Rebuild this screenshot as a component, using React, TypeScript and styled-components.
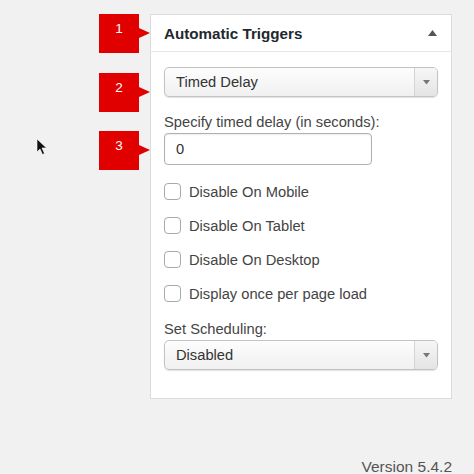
import React from "react";
import styled, { createGlobalStyle } from "styled-components";

const Global = createGlobalStyle`
  html, body { margin: 0; padding: 0; }
  body {
    background: #f1f1f1;
    font-family: "Liberation Sans", Arial, Helvetica, sans-serif;
    color: #32373c;
    width: 474px;
    height: 474px;
    overflow: hidden;
  }
`;

const Page = styled.div`
  position: relative;
  width: 474px;
  height: 474px;
  display: flex;
  flex-direction: column;
  align-items: flex-start;
  padding: 14px 0 0 150px;
  box-sizing: border-box;
`;

const Cursor = styled.svg`
  position: absolute;
  left: 36px;
  top: 138px;
`;

const Panel = styled.section`
  width: 302px;
  box-sizing: border-box;
  background: #fff;
  border: 1px solid #dcdcde;
`;

const Header = styled.header`
  position: relative;
  height: 37px;
  box-sizing: border-box;
  border-bottom: 1px solid #e6e6e6;
  display: flex;
  align-items: center;
  justify-content: space-between;
  padding: 0 14px 0 13px;
`;

const Title = styled.h2`
  margin: 0;
  font-size: 15.2px;
  font-weight: 700;
  color: #23282d;
`;

const Body = styled.div`
  display: flex;
  flex-direction: column;
  padding: 15px 13px 28px 13px;
`;

const Field = styled.div<{ $gap?: number }>`
  position: relative;
  display: flex;
  flex-direction: column;
  align-items: flex-start;
  margin-top: ${(p) => p.$gap ?? 0}px;
`;

const Marker = styled.div<{ $top: number }>`
  position: absolute;
  left: -65px;
  top: ${(p) => p.$top}px;
  width: 40px;
  height: 39px;
  background: #e10000;
  color: #fff;
  font-size: 13.5px;
  display: flex;
  justify-content: center;
  padding-top: 7px;
  box-sizing: border-box;
  &::after {
    content: "";
    position: absolute;
    left: 40px;
    top: 14px;
    border-top: 5px solid transparent;
    border-bottom: 5px solid transparent;
    border-left: 11px solid #e10000;
  }
`;

const HeaderMarker = styled(Marker)`
  left: -52px;
`;

const Select = styled.div`
  width: 274px;
  height: 30px;
  box-sizing: border-box;
  border: 1px solid #c3c3c3;
  border-radius: 5px;
  background: linear-gradient(#fdfdfd, #f0f0f0);
  box-shadow: 0 1px 1px rgba(0, 0, 0, 0.12);
  display: flex;
  align-items: stretch;
  font-size: 14.7px;
  color: #333;
`;

const SelectText = styled.span`
  flex: 1;
  display: flex;
  align-items: center;
  padding-left: 11px;
`;

const SelectButton = styled.span`
  width: 22px;
  border-left: 1px solid #d4d4d4;
  display: flex;
  align-items: center;
  justify-content: center;
  background: linear-gradient(#f6f6f6, #e4e4e4);
  border-radius: 0 4px 4px 0;
`;

const Label = styled.label`
  font-size: 14.7px;
  color: #444;
  line-height: 16px;
`;

const Input = styled.div`
  width: 208px;
  height: 32px;
  box-sizing: border-box;
  border: 1px solid #b0b0b0;
  border-radius: 4px;
  box-shadow: inset 0 1px 2px rgba(0, 0, 0, 0.07);
  display: flex;
  align-items: center;
  padding-left: 11px;
  font-size: 14.7px;
  color: #333;
  margin-top: 3px;
`;

const CheckList = styled.div`
  display: flex;
  flex-direction: column;
  gap: 17px;
  margin-top: 18px;
`;

const CheckRow = styled.div`
  display: flex;
  align-items: center;
  gap: 8px;
  font-size: 14.7px;
  color: #444;
  height: 17px;
`;

const Box = styled.span`
  width: 17px;
  height: 17px;
  box-sizing: border-box;
  border: 1px solid #a9a9a9;
  border-radius: 4px;
  background: #fff;
`;

const SchedLabel = styled(Label)`
  margin-top: 19px;
  margin-bottom: 3px;
`;

const Footer = styled.div`
  width: 302px;
  display: flex;
  justify-content: flex-end;
  margin-top: 61px;
  font-size: 15.5px;
  line-height: 14px;
  color: #555;
`;

const ArrowDown = () => (
  <svg width="7" height="5" viewBox="0 0 7 5">
    <path d="M0 0 L7 0 L3.5 4.5 Z" fill="#777" />
  </svg>
);

const App: React.FC = () => (
  <>
    <Global />
    <Page>
      <Cursor width="12" height="18" viewBox="0 0 12 18">
        <path d="M1 1 L1 14 L4 11 L6.5 16.5 L8.5 15.5 L6 10 L10.5 10 Z" fill="#111" stroke="#fff" strokeWidth="0.6" />
      </Cursor>
      <Panel>
        <Header>
          <HeaderMarker $top={-1}>1</HeaderMarker>
          <Title>Automatic Triggers</Title>
          <svg width="9" height="6" viewBox="0 0 9 6">
            <path d="M0 6 L9 6 L4.5 0 Z" fill="#555" />
          </svg>
        </Header>
        <Body>
          <Field>
            <Marker $top={6}>2</Marker>
            <Select>
              <SelectText>Timed Delay</SelectText>
              <SelectButton>
                <ArrowDown />
              </SelectButton>
            </Select>
          </Field>
          <Field $gap={17}>
            <Label>Specify timed delay (in seconds):</Label>
            <Marker $top={17}>3</Marker>
            <Input>0</Input>
          </Field>
          <CheckList>
            <CheckRow>
              <Box />
              Disable On Mobile
            </CheckRow>
            <CheckRow>
              <Box />
              Disable On Tablet
            </CheckRow>
            <CheckRow>
              <Box />
              Disable On Desktop
            </CheckRow>
            <CheckRow>
              <Box />
              Display once per page load
            </CheckRow>
          </CheckList>
          <SchedLabel>Set Scheduling:</SchedLabel>
          <Select>
            <SelectText>Disabled</SelectText>
            <SelectButton>
              <ArrowDown />
            </SelectButton>
          </Select>
        </Body>
      </Panel>
      <Footer>Version 5.4.2</Footer>
    </Page>
  </>
);

export default App;
